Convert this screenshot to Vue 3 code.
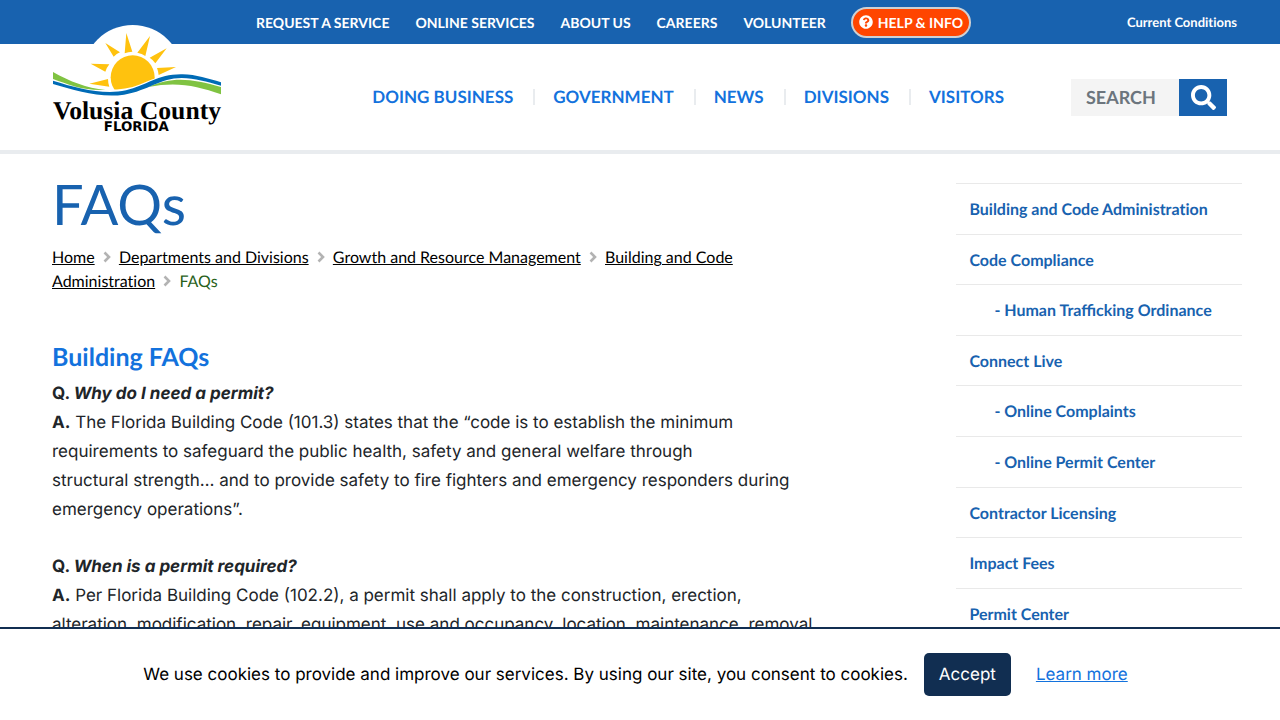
<script setup>
const topLinks = ['Request a Service', 'Online Services', 'About Us', 'Careers', 'Volunteer']
const mainLinks = ['Doing Business', 'Government', 'News', 'Divisions', 'Visitors']
const crumbs = [
  'Home',
  'Departments and Divisions',
  'Growth and Resource Management',
  'Building and Code Administration',
]
const sideLinks = [
  { text: 'Building and Code Administration' },
  { text: 'Code Compliance' },
  { text: '- Human Trafficking Ordinance', sub: true },
  { text: 'Connect Live' },
  { text: '- Online Complaints', sub: true },
  { text: '- Online Permit Center', sub: true },
  { text: 'Contractor Licensing' },
  { text: 'Impact Fees' },
  { text: 'Permit Center' },
]
</script>

<template>
  <div class="page">
    <header class="header">
      <div class="topbar">
        <nav class="topnav" aria-label="Services">
          <a v-for="link in topLinks" :key="link" href="#">{{ link }}</a>
          <a href="#" class="help">
            <svg viewBox="0 0 512 512" aria-hidden="true">
              <path fill="currentColor" d="M504 256c0 137-111 248-248 248S8 393 8 256C8 119.100 119 8 256 8s248 111.100 248 248zM262.700 90c-54.500 0-89.300 23-116.500 63.800-3.500 5.300-2.400 12.400 2.700 16.300l34.700 26.300c5.200 3.900 12.600 3 16.700-2.100 17.900-22.700 30.100-35.800 57.300-35.800 20.400 0 45.700 13.100 45.700 33 0 15-12.400 22.700-32.500 34C247.100 238.500 216 254.900 216 296v4c0 6.600 5.400 12 12 12h56c6.600 0 12-5.400 12-12v-1.300c0-28.500 83.200-29.600 83.200-106.700 0-58-60.200-102-116.500-102zM256 338c-25.400 0-46 20.600-46 46s20.600 46 46 46 46-20.600 46-46-20.600-46-46-46z" />
            </svg>
            Help &amp; Info
          </a>
        </nav>
        <a href="#" class="conditions">Current Conditions</a>
      </div>

      <div class="mainbar">
        <a href="#" class="logo" aria-label="Volusia County Florida">
          <svg viewBox="39 44 504 324" role="img">
            <circle cx="278" cy="194" r="150" fill="#fff" />
            <g fill="#ffc20e">
              <circle cx="278" cy="201" r="66" />
              <path d="M152 160L208 162Q200 172 196 184Z" />
              <path d="M196 98L240 126Q230 130 221 139Z" />
              <path d="M259 68L277 124Q265 124 254 129Z" />
              <path d="M330 77L316 137Q306 130 292 127Z" />
              <path d="M380 114L346 159Q340 149 329 142Z" />
              <path d="M408 170L356 194Q355 183 351 173Z" />
              <path d="M148 220L204 206Q204 218 208 229Z" />
            </g>
            <path fill="#fff" d="M170 234C230 242 270 236 310 218C350 200 390 190 430 194L420 300H170Z" />
            <path fill="#80c342" d="M39 185C90 214 140 233 196 239C130 242 85 222 39 206Z" />
            <path fill="#80c342" d="M325 230C400 196 460 207 543 230V252C470 226 410 213 325 230Z" />
            <path fill="#006bb6" d="M39 211C110 233 190 255 258 240C320 226 355 190 428 192C468 193 505 205 543 216V226C500 214 465 204 425 203C360 203 325 241 252 253C180 263 105 241 39 221Z" />
            <text class="logo-name" x="291" y="325">Volusia County</text>
            <text class="logo-state" x="289" y="363">FLORIDA</text>
          </svg>
        </a>
        <nav class="mainnav" aria-label="Main">
          <a v-for="link in mainLinks" :key="link" href="#">{{ link }}</a>
        </nav>
        <form class="search" @submit.prevent>
          <input type="text" placeholder="SEARCH" aria-label="Search" />
          <button type="submit" aria-label="Submit search">
            <svg viewBox="0 0 512 512" aria-hidden="true">
              <path fill="currentColor" d="M505 442.700L405.300 343c-4.500-4.500-10.600-7-17-7H372c27.600-35.300 44-79.700 44-128C416 93.100 322.900 0 208 0S0 93.100 0 208s93.100 208 208 208c48.300 0 92.700-16.400 128-44v16.300c0 6.400 2.500 12.500 7 17l99.700 99.700c9.400 9.400 24.600 9.400 33.900 0l28.300-28.300c9.400-9.400 9.400-24.600.1-34zM208 336c-70.700 0-128-57.200-128-128 0-70.700 57.200-128 128-128 70.700 0 128 57.200 128 128 0 70.700-57.200 128-128 128z" />
            </svg>
          </button>
        </form>
      </div>
    </header>

    <div class="content">
      <main>
        <h1>FAQs</h1>
        <nav class="crumbs" aria-label="Breadcrumb">
          <template v-for="crumb in crumbs" :key="crumb">
            <a href="#">{{ crumb }}</a>
            {{ ' ' }}
            <svg viewBox="0 0 8 12" aria-hidden="true">
              <path d="M1.500 1.500L6 6L1.500 10.500" fill="none" stroke="#b3b3b3" stroke-width="2.600" />
            </svg>
            {{ ' ' }}
          </template>
          <span>FAQs</span>
        </nav>
        <h2>Building FAQs</h2>
        <p>
          <b>Q. <i>Why do I need a permit?</i></b><br />
          <b>A.</b> The Florida Building Code (101.3) states that the “code is to establish the minimum
          requirements to safeguard the public health, safety and general welfare through<br />
          structural strength… and to provide safety to fire fighters and emergency responders during
          emergency operations”.
        </p>
        <p>
          <b>Q. <i>When is a permit required?</i></b><br />
          <b>A.</b> Per Florida Building Code (102.2), a permit shall apply to the construction, erection,
          alteration, modification, repair, equipment, use and occupancy, location, maintenance, removal
        </p>
      </main>
      <nav class="side" aria-label="Section">
        <a v-for="link in sideLinks" :key="link.text" href="#" :class="{ sub: link.sub }">{{ link.text }}</a>
      </nav>
    </div>

    <div class="cookies" role="region" aria-label="Cookie notice">
      <span>We use cookies to provide and improve our services. By using our site, you consent to cookies.</span>
      <button type="button">Accept</button>
      <a href="#">Learn more</a>
    </div>
  </div>
</template>

<style>
body {
  margin: 0;
  background: #fff;
}
</style>

<style scoped>
.page {
  font-family: Lato, "Liberation Sans", sans-serif;
  font-variant-ligatures: no-common-ligatures;
  text-rendering: geometricPrecision;
  color: #212529;
}
.page *,
.page *::before {
  box-sizing: border-box;
}
a {
  color: inherit;
  text-decoration: none;
}
.topbar {
  display: flex;
  align-items: center;
  justify-content: space-between;
  min-height: 44px;
  padding: 0 43px 0 256px;
  background: #1862af;
  color: #fff;
  font-weight: 700;
}
.topnav {
  display: flex;
  align-items: center;
  gap: 26px;
  font-size: 14px;
  line-height: 19px;
  text-transform: uppercase;
}
.help {
  display: flex;
  align-items: center;
  gap: 5px;
  margin-left: -1px;
  padding: 4px 6px;
  border: 2px solid #ced0d3;
  border-radius: 16px;
  background: #ff4500;
}
.help svg {
  width: 14px;
  height: 14px;
}
.conditions {
  font-size: 13px;
}
.mainbar {
  display: flex;
  align-items: flex-start;
  padding: 0 53px 17px;
  border-bottom: 4px solid #e9ecef;
}
.logo {
  position: relative;
  margin-top: -19px;
}
.logo svg {
  display: block;
  width: 168px;
  height: 108px;
  overflow: visible;
}
.logo-name {
  font: 700 77px "Liberation Serif", serif;
  text-anchor: middle;
}
.logo-state {
  font: 700 40px "DejaVu Sans", sans-serif;
  text-anchor: middle;
}
.mainnav {
  display: flex;
  margin: 41px 67px 0 auto;
  font-size: 17px;
  font-weight: 700;
  line-height: 24px;
  color: #1372dd;
  text-transform: uppercase;
}
.mainnav a {
  display: flex;
  align-items: center;
}
.mainnav a + a::before {
  content: "";
  width: 2px;
  height: 16px;
  margin: 0 18px 0 20px;
  background: #e9ecef;
}
.search {
  display: flex;
  margin-top: 35px;
}
.search input {
  width: 108px;
  height: 37px;
  padding: 0 15px 2px;
  border: 0;
  border-radius: 0;
  background: #f4f4f4;
  font: 700 18px Lato, sans-serif;
  text-rendering: inherit;
  color: #6c757d;
}
.search input::placeholder {
  color: #6c757d;
  opacity: 1;
}
.search button {
  display: grid;
  place-items: center;
  width: 48px;
  padding: 0;
  border: 0;
  background: #1862af;
  color: #fff;
}
.search svg {
  width: 25px;
  height: 25px;
}
.content {
  display: grid;
  grid-template-columns: 65% 24%;
  justify-content: space-between;
  align-items: start;
  padding: 16px 38px 0 52px;
}
h1 {
  margin: 0 0 8px;
  font-size: 56px;
  font-weight: 400;
  line-height: 68px;
  color: #1862af;
}
.crumbs {
  font-size: 16px;
  line-height: 24px;
  color: #28611b;
}
.crumbs a {
  color: #000;
  text-decoration: underline;
}
.crumbs svg {
  width: 8px;
  height: 12px;
  margin: 0 4px;
}
h2 {
  margin: 48px 0 8px;
  font-size: 25px;
  font-weight: 700;
  line-height: 30px;
  color: #1372dd;
}
p {
  margin: 0 0 29px;
  font-family: Inter, sans-serif;
  font-size: 17px;
  line-height: 1.7;
}
.side {
  margin-top: 13px;
  border-top: 1px solid #e9e9e9;
  font-size: 16px;
  font-weight: 700;
  line-height: 1.6;
  color: #1862af;
}
.side a {
  display: block;
  padding: 13px 13px 11px;
  border-bottom: 1px solid #e9e9e9;
}
.side a:last-child {
  border-bottom: 0;
}
.side .sub {
  padding-left: 38px;
  font-variant-ligatures: normal;
}
.cookies {
  position: fixed;
  right: 0;
  bottom: 0;
  left: 0;
  display: flex;
  align-items: center;
  justify-content: center;
  padding: 24px 9px 24px 0;
  border-top: 2px solid #112e51;
  background: #fff;
  color: #000;
  font: 17px/24px Inter, sans-serif;
}
.cookies button {
  margin: 0 25px 0 16px;
  padding: 10px 15px 9px;
  border: 0;
  border-radius: 5px;
  background: #112e51;
  color: #fff;
  font: inherit;
  text-rendering: inherit;
}
.cookies a {
  color: #1372dd;
  text-decoration: underline;
}
</style>
